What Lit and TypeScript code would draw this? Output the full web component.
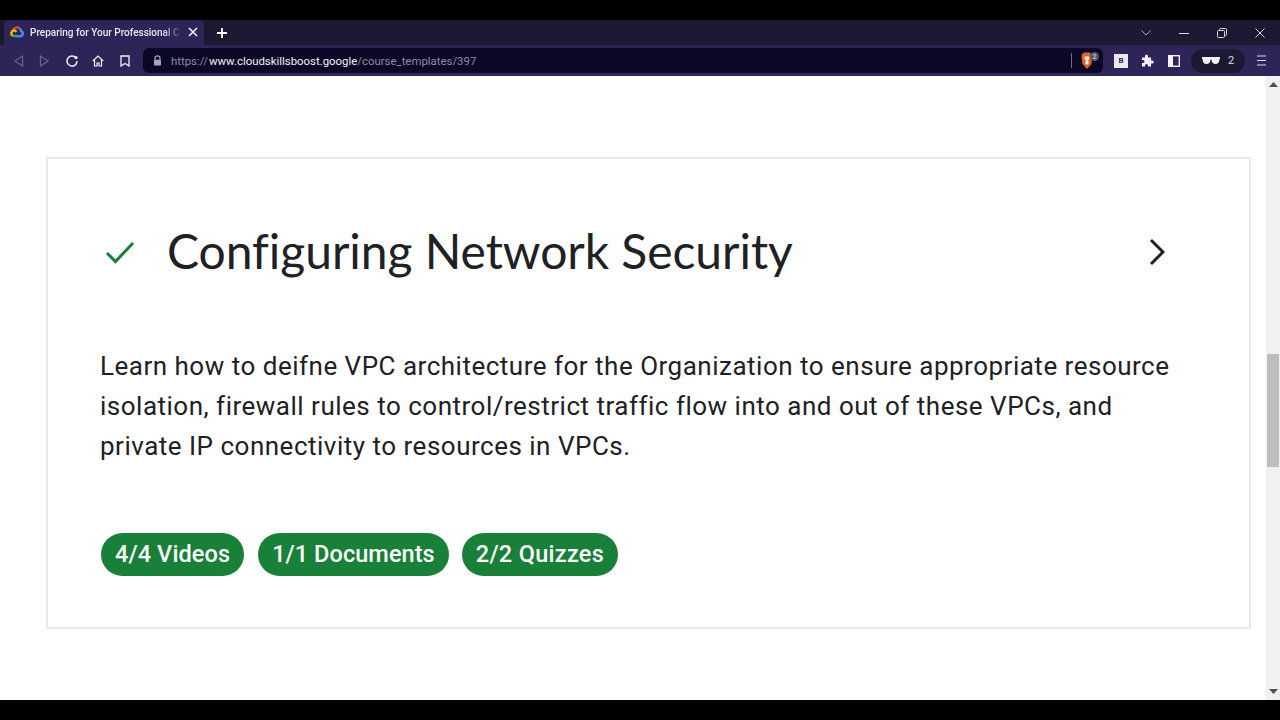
import { LitElement, html, css } from "lit";
import { customElement } from "lit/decorators.js";

@customElement("app-root")
export class AppRoot extends LitElement {
  static styles = css`
    :host { display: flex; flex-direction: column; width: 1280px; height: 720px; background: #000; overflow: hidden; font-family: "Roboto", "Liberation Sans", sans-serif; }
    .top { height: 20px; flex: none; background: #000; }
    .bottom { height: 20px; flex: none; background: #000; }
    .tabstrip { height: 25px; flex: none; background: #1c1a33; display: flex; align-items: flex-end; padding-left: 4px; }
    .tab { width: 200px; height: 25px; box-sizing: border-box; background: #2f2458; border-radius: 6px 6px 0 0; display: flex; align-items: center; padding: 0 6px 1px 6px; color: #e8e6f2; font-size: 10px; font-weight: 500; }
    .favicon { width: 14px; height: 14px; flex: none; margin-right: 6px; }
    .tabtitle { flex: 1; white-space: nowrap; -webkit-mask-image: linear-gradient(to right, #000 88%, transparent 100%); mask-image: linear-gradient(to right, #000 88%, transparent 100%); }
    .tabx { width: 10px; height: 10px; flex: none; margin-left: 6px; }
    .plus { width: 12px; height: 12px; margin: 0 0 6px 12px; flex: none; }
    .spacer { flex: 1; }
    .winbtns { align-self: center; display: flex; align-items: center; padding-right: 15px; }
    .winbtns svg { display: block; }
    .chev { margin-right: 28px; }
    .minb { margin-right: 28px; }
    .maxb { margin-right: 28px; }
    .toolbar { height: 31px; flex: none; box-sizing: border-box; background: #2f2458; display: flex; align-items: center; padding: 0 13px; }
    .tool { display: block; flex: none; }
    .t1 { margin-right: 15px; }
    .t2 { margin-right: 16px; }
    .t3 { margin-right: 14px; }
    .t4 { margin-right: 16px; }
    .t5 { margin-right: 13px; }
    .omni { flex: none; width: 960px; height: 25px; box-sizing: border-box; background: #0b0726; border-radius: 6px; display: flex; align-items: center; padding: 0 3px 0 10px; font-size: 11.4px; color: #8f8ba3; white-space: nowrap; }
    .lock { width: 9px; height: 11px; margin-right: 9px; flex: none; }
    .host { color: #f2f1f6; padding-left: 1px; }
    .sep { width: 1px; height: 15px; background: #6f6b85; margin-left: auto; margin-right: 8px; }
    .brave { width: 20px; height: 18px; flex: none; }
    .b { width: 14px; height: 14px; background: #e9e9f2; color: #2f2458; font-size: 8px; font-weight: 700; display: flex; align-items: center; justify-content: center; margin-left: 11px; flex: none; }
    .puzzle { margin-left: 13px; }
    .side { margin-left: 14px; }
    .glasses { margin-left: 11px; width: 54px; height: 24px; border-radius: 12px; background: #1c1a33; display: flex; align-items: center; justify-content: center; gap: 8px; color: #dcdae8; font-size: 11px; flex: none; }
    .menu { margin-left: 12px; }
    .page { flex: 1; min-height: 0; background: #fff; display: flex; }
    .content { flex: 1; min-width: 0; padding: 81px 15px 0 46px; }
    .card { width: 1205px; height: 472px; box-sizing: border-box; border: 2px solid #e9e9e9; padding: 0 52px; display: flex; flex-direction: column; }
    .head { display: flex; align-items: center; height: 46px; margin-top: 70px; }
    .check { flex: none; width: 30px; height: 24px; margin-left: 5px; margin-right: 32px; }
    h1 { margin: 0; padding-bottom: 2px; font: 400 48px/46px "Lato", "Liberation Sans", sans-serif; letter-spacing: -0.05px; color: #202124; white-space: nowrap; flex: 1; }
    .arrow { flex: none; width: 16px; height: 28px; margin-right: 32px; }
    p { margin: 71px 0 0 0; font: 400 26px/40px "Roboto", sans-serif; letter-spacing: 0.5px; color: #202124; }
    .chips { display: flex; gap: 13px; margin-top: 67px; margin-left: 1px; }
    .chip { height: 43px; box-sizing: border-box; border-radius: 22px; background: #188038; color: #fff; display: flex; align-items: center; padding: 0 14px; font: 500 23.5px/1 "Roboto", sans-serif; letter-spacing: 0.06px; white-space: nowrap; }
    .chip.v { margin-right: 1px; letter-spacing: 0.1px; }
    .chip.q { letter-spacing: 0.3px; }
    .scroll { width: 14px; flex: none; background: #f1f1f1; display: flex; flex-direction: column; }
    .sbtn { height: 17px; flex: none; display: flex; align-items: center; justify-content: center; }
    .track { flex: 1; display: flex; flex-direction: column; }
    .gapA { height: 261px; flex: none; }
    .thumb { height: 113px; flex: none; margin: 0 1px; background: #bdbdbd; }
  `;

  render() {
    return html`
      <div class="top"></div>
      <div class="tabstrip">
        <div class="tab">
          <svg class="favicon" viewBox="0 0 24 24">
            <path fill="#ea4335" d="M15.500 7.500l2.100-2.100.1-.9A9.200 9.200 0 0 0 3 9l.8-.1 4-.7.3-.3a5.200 5.200 0 0 1 7.400-.4z"/>
            <path fill="#4285f4" d="M21 9a9.300 9.300 0 0 0-2.800-4.500l-3 3a5.200 5.200 0 0 1 1.900 4.100v.5a2.600 2.600 0 1 1 0 5.200h-5.200l-.5.500v3.100l.5.500H17A6.700 6.700 0 0 0 21 9z"/>
            <path fill="#34a853" d="M7 20.900h5.200v-4H7a2.600 2.600 0 0 1-1.100-.2l-.7.2-2.100 2.100-.2.700A6.700 6.700 0 0 0 7 20.900z"/>
            <path fill="#fbbc05" d="M7 7.500a6.700 6.700 0 0 0-4 12.100l3-3A2.600 2.600 0 1 1 9.500 13.100l3-3A6.700 6.700 0 0 0 7 7.500z"/>
          </svg>
          <span class="tabtitle">Preparing for Your Professional C</span>
          <svg class="tabx" viewBox="0 0 10 10"><path d="M1 1l8 8M9 1l-8 8" stroke="#f0eff5" stroke-width="1.600"/></svg>
        </div>
        <svg class="plus" viewBox="0 0 12 12"><path d="M6 1v10M1 6h10" stroke="#fff" stroke-width="1.800"/></svg>
        <div class="spacer"></div>
        <div class="winbtns">
          <svg class="chev" width="10" height="6" viewBox="0 0 10 6"><path d="M.5.5L5 5 9.500.5" fill="none" stroke="#a9a7b8" stroke-width="1"/></svg>
          <svg class="minb" width="10" height="10" viewBox="0 0 10 10"><path d="M0 5.500h10" stroke="#d8d7e0" stroke-width="1"/></svg>
          <svg class="maxb" width="10" height="10" viewBox="0 0 10 10"><path d="M2.500 2.500V1.500a1 1 0 0 1 1-1h5a1 1 0 0 1 1 1v5a1 1 0 0 1-1 1h-1" fill="none" stroke="#d8d7e0"/><rect x=".5" y="2.500" width="7" height="7" rx="1" fill="none" stroke="#d8d7e0"/></svg>
          <svg width="10" height="10" viewBox="0 0 10 10"><path d="M.5.5l9 9M9.500.5l-9 9" stroke="#d8d7e0" stroke-width="1"/></svg>
        </div>
      </div>
      <div class="toolbar">
        <svg class="tool t1" width="11" height="12" viewBox="0 0 11 12"><path d="M9.500 1L2 6l7.500 5z" fill="none" stroke="#6a5f92" stroke-width="1.300"/></svg>
        <svg class="tool t2" width="11" height="12" viewBox="0 0 11 12"><path d="M1.500 1L9 6l-7.500 5z" fill="none" stroke="#6a5f92" stroke-width="1.300"/></svg>
        <svg class="tool t3" width="12" height="12" viewBox="0 0 12 12"><path d="M9.800 2.800A5 5 0 1 0 11 6" fill="none" stroke="#f2f1f6" stroke-width="1.500"/><circle cx="10" cy="2.600" r="1.600" fill="#f2f1f6"/></svg>
        <svg class="tool t4" width="12" height="12" viewBox="0 0 12 12"><path d="M.8 6L6 1l5.200 5M2.500 5v6h2.500V8h2v3h2.500V5" fill="none" stroke="#f2f1f6" stroke-width="1.200"/></svg>
        <svg class="tool t5" width="10" height="12" viewBox="0 0 10 12"><path d="M1 1h8v10L5 8.500 1 11z" fill="none" stroke="#f2f1f6" stroke-width="1.300"/></svg>
        <div class="omni">
          <svg class="lock" viewBox="0 0 9 11"><path d="M2 5V3.300a2.500 2.500 0 0 1 5 0V5" fill="none" stroke="#a8a6b8" stroke-width="1.200"/><rect x="1" y="4.800" width="7" height="5.700" rx=".8" fill="#a8a6b8"/></svg>
          <span>https://<span class="host">www.cloudskillsboost.google</span>/course_templates/397</span>
          <span class="sep"></span>
          <svg class="brave" viewBox="0 0 20 18">
            <path d="M2 2l2-1.500h6L11 2l1 3-.5 7L7 17 2.500 12 1.500 5z" fill="#e0632a"/>
            <path d="M4 5l3-.8L10 5 8 9l1 2-2 2-2-2 1-2z" fill="#fff" opacity=".85"/>
            <circle cx="14.500" cy="4.500" r="4.500" fill="#55546a"/>
            <text x="14.500" y="7" font-size="7" text-anchor="middle" fill="#e8e8ee" font-family="Roboto">2</text>
          </svg>
        </div>
        <div class="b">B</div>
        <svg class="tool puzzle" width="13" height="13" viewBox="0 0 13 13"><path d="M1 3.500h3V2a1.500 1.500 0 0 1 3 0v1.500h3v3h1.200a1.500 1.500 0 0 1 0 3H10V12.500H7v-1a1.500 1.500 0 0 0-3 0v1H1V9h1a1.500 1.500 0 0 0 0-3H1z" fill="#f2f1f6"/></svg>
        <svg class="tool side" width="12" height="12" viewBox="0 0 12 12"><rect x=".7" y=".7" width="10.600" height="10.600" fill="none" stroke="#f2f1f6" stroke-width="1.400"/><rect x="1" y="1" width="4" height="10" fill="#f2f1f6"/></svg>
        <div class="glasses">
          <svg width="18" height="7" viewBox="0 0 18 7"><path d="M0 0h18v2h-.5c0 3-1.500 5-4 5s-4-2-4-4.500h-1C8.500 5 7 7 4.500 7S.5 5 .5 2H0z" fill="#f2f1f6"/></svg>
          <span>2</span>
        </div>
        <svg class="tool menu" width="9" height="11" viewBox="0 0 9 11"><path d="M0 1h9M0 5.500h9M0 10h9" stroke="#dcdae8" stroke-width="1.200"/></svg>
      </div>
      <div class="page">
        <div class="content">
          <div class="card">
            <div class="head">
              <svg class="check" viewBox="0 0 30 24"><path d="M2 13l8.500 8.500L28 3" fill="none" stroke="#188038" stroke-width="3"/></svg>
              <h1>Configuring Network Security</h1>
              <svg class="arrow" viewBox="0 0 16 28"><path d="M2 2l12 12L2 26" fill="none" stroke="#202124" stroke-width="3"/></svg>
            </div>
            <p>Learn how to deifne VPC architecture for the Organization to ensure appropriate resource isolation, firewall rules to control/restrict traffic flow into and out of these VPCs, and private IP connectivity to resources in VPCs.</p>
            <div class="chips">
              <div class="chip v">4/4 Videos</div>
              <div class="chip">1/1 Documents</div>
              <div class="chip q">2/2 Quizzes</div>
            </div>
          </div>
        </div>
        <div class="scroll">
          <div class="sbtn"><svg width="9" height="5" viewBox="0 0 9 5"><path d="M4.500 0L9 5H0z" fill="#505050"/></svg></div>
          <div class="track"><div class="gapA"></div><div class="thumb"></div></div>
          <div class="sbtn"><svg width="9" height="5" viewBox="0 0 9 5"><path d="M0 0h9L4.500 5z" fill="#505050"/></svg></div>
        </div>
      </div>
      <div class="bottom"></div>
    `;
  }
}
